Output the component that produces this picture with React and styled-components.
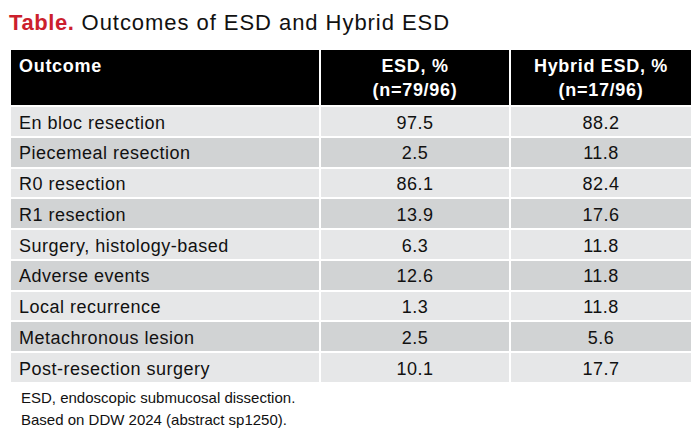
import React from "react";
import styled, { createGlobalStyle } from "styled-components";

const Global = createGlobalStyle`
  html, body { margin: 0; padding: 0; background: #fff; }
  body { font-family: "Liberation Sans", Arial, sans-serif; color: #111; }
`;

const Page = styled.div`
  width: 700px;
  height: 441px;
  box-sizing: border-box;
  padding: 11px 9px 0 11px;
  background: #fff;
`;

const Title = styled.h1`
  margin: 0 0 15px -2px;
  font-size: 22px;
  line-height: 24px;
  font-weight: 400;
  letter-spacing: 0.95px;
  color: #111;
  white-space: nowrap;
`;

const Label = styled.span`
  color: #cc1f2d;
  font-weight: 700;
  letter-spacing: 0.6px;
`;

const Grid = styled.div`
  display: grid;
  grid-template-columns: 308px 188px 180px;
  grid-auto-rows: 28.75px;
  grid-template-rows: 55px;
  gap: 2px;
  width: 680px;
`;

const HeadCell = styled.div`
  background: #000;
  color: #fff;
  font-weight: 700;
  font-size: 18px;
  line-height: 24px;
  letter-spacing: 0.7px;
  padding: 4px 8px 0;
  text-align: ${(p) => (p.$center ? "center" : "left")};
`;

const Cell = styled.div`
  background: ${(p) => (p.$dark ? "#d1d3d4" : "#e6e7e8")};
  font-size: 18px;
  line-height: 28.75px;
  letter-spacing: 0.5px;
  padding: 1.5px 8px 0;
  box-sizing: border-box;
  color: #111;
  text-align: ${(p) => (p.$center ? "center" : "left")};
  white-space: nowrap;
`;

const Notes = styled.div`
  margin-top: 5px;
  padding-left: 10px;
  font-size: 15px;
  line-height: 22px;
  color: #111;
`;

const rows = [
  ["En bloc resection", "97.5", "88.2"],
  ["Piecemeal resection", "2.5", "11.8"],
  ["R0 resection", "86.1", "82.4"],
  ["R1 resection", "13.9", "17.6"],
  ["Surgery, histology-based", "6.3", "11.8"],
  ["Adverse events", "12.6", "11.8"],
  ["Local recurrence", "1.3", "11.8"],
  ["Metachronous lesion", "2.5", "5.6"],
  ["Post-resection surgery", "10.1", "17.7"],
];

export default function App() {
  return (
    <Page>
      <Global />
      <Title>
        <Label>Table.</Label> Outcomes of ESD and Hybrid ESD
      </Title>
      <Grid>
        <HeadCell>Outcome</HeadCell>
        <HeadCell $center>
          ESD, %<br />(n=79/96)
        </HeadCell>
        <HeadCell $center>
          Hybrid ESD, %<br />(n=17/96)
        </HeadCell>
        {rows.map(([name, a, b], i) => (
          <React.Fragment key={name}>
            <Cell $dark={i % 2 === 1}>{name}</Cell>
            <Cell $dark={i % 2 === 1} $center>{a}</Cell>
            <Cell $dark={i % 2 === 1} $center>{b}</Cell>
          </React.Fragment>
        ))}
      </Grid>
      <Notes>
        ESD, endoscopic submucosal dissection.
        <br />
        Based on DDW 2024 (abstract sp1250).
      </Notes>
    </Page>
  );
}
